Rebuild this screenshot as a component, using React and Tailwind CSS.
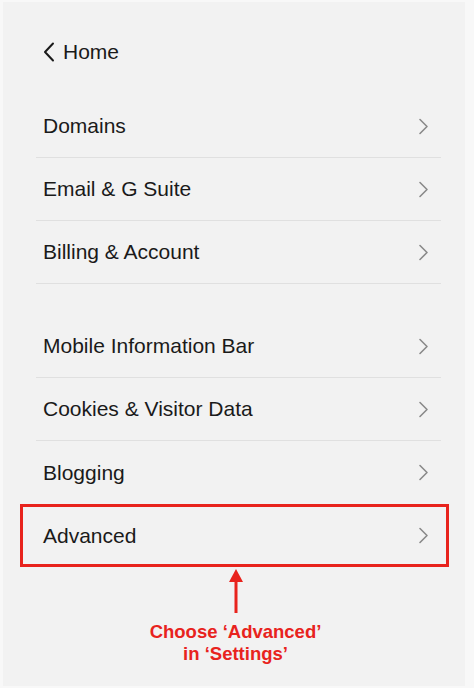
import React from "react";

const Chevron = ({ className = "" }) => (
  <svg width="11" height="17" viewBox="0 0 11 17" className={className} fill="none">
    <path d="M2 1.5 L9 8.5 L2 15.5" stroke="currentColor" strokeWidth="1.6" strokeLinecap="round" strokeLinejoin="round" />
  </svg>
);

const Row = ({ label, divider = true }) => (
  <div className={`flex h-[63px] items-center justify-between pl-[7px] pr-[12px] ${divider ? "border-b border-[#e0e0e0]" : ""}`}>
    <span className="text-[21px] text-[#1a1a1a]">{label}</span>
    <Chevron className="text-[#8a8a8a]" />
  </div>
);

export default function App() {
  return (
    <div className="w-[474px] h-[688px] bg-[#f8f8f8] pt-[2px] pl-[3px]" style={{ fontFamily: '"Liberation Sans", Arial, sans-serif' }}>
      <div className="w-[462px] h-[684px] bg-[#f2f2f2] pl-[33px] flex flex-col">
        <div className="flex items-center h-[40px] mt-[30px] pl-[7px] gap-[8px] text-[#1a1a1a]">
          <svg width="12" height="20" viewBox="0 0 12 20" fill="none">
            <path d="M10 1.5 L2 10 L10 18.5" stroke="currentColor" strokeWidth="2" strokeLinecap="round" strokeLinejoin="round" />
          </svg>
          <span className="text-[21px]">Home</span>
        </div>
        <div className="w-[405px] mt-[23px] flex flex-col">
          <Row label="Domains" />
          <Row label="Email & G Suite" />
          <Row label="Billing & Account" />
          <div className="h-[31px]" />
          <Row label="Mobile Information Bar" />
          <Row label="Cookies & Visitor Data" />
          <Row label="Blogging" divider={false} />
          <div className="ml-[-16px] mr-[-8px] border-[3px] border-[#e8231d]">
            <div className="flex h-[57px] items-center justify-between pl-[20px] pr-[17px]">
              <span className="text-[21px] text-[#1a1a1a]">Advanced</span>
              <Chevron className="text-[#8a8a8a]" />
            </div>
          </div>
          <div className="flex flex-col items-center mt-[2px] w-[405px] pr-[6px]">
            <svg width="16" height="44" viewBox="0 0 16 44" className="text-[#e8231d]">
              <path d="M8 0 L15 13 L1 13 Z" fill="currentColor" />
              <rect x="6.5" y="12" width="3" height="32" fill="currentColor" />
            </svg>
            <div className="mt-[8px] text-center text-[18.5px] font-bold leading-[22px] text-[#e8231d]">
              <div>Choose ‘Advanced’</div>
              <div>in ‘Settings’</div>
            </div>
          </div>
        </div>
      </div>
    </div>
  );
}
